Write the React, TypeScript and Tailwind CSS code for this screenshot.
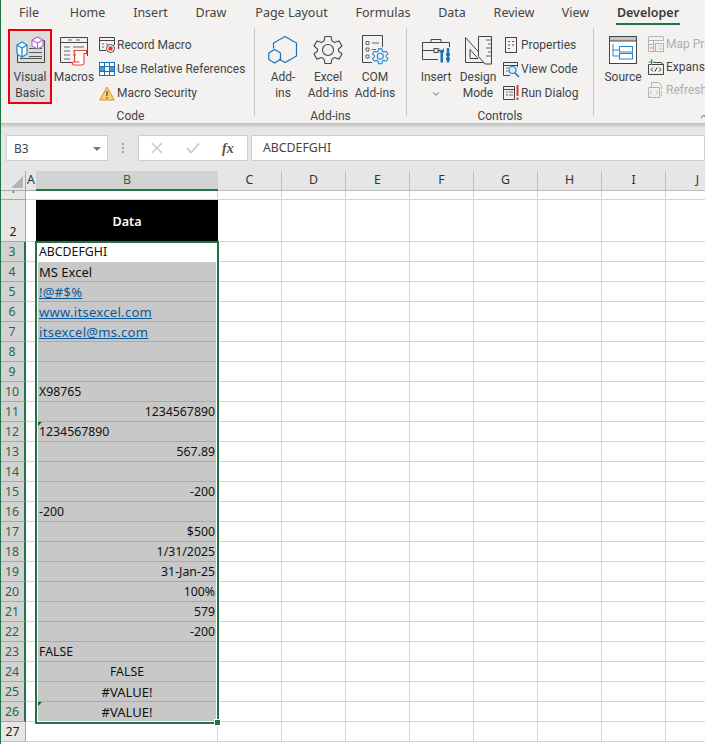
import { ChevronDown } from 'lucide-react';

const font = { fontFamily: '"Noto Sans", "Open Sans", sans-serif' };
const ribbonFont = { fontFamily: 'Roboto, "Noto Sans", sans-serif' };

const tabs = ['File', 'Home', 'Insert', 'Draw', 'Page Layout', 'Formulas', 'Data', 'Review', 'View', 'Developer'];
const tabWidths = [52, 65, 61, 60, 101, 82, 56, 68, 55, 70];
const cols = ['C', 'D', 'E', 'F', 'G', 'H', 'I', 'J'];

type Row = { n: number; text?: string; align?: 'left' | 'right' | 'center'; link?: boolean; flag?: boolean; wide?: boolean };

const rows: Row[] = [
  { n: 3, text: 'ABCDEFGHI' },
  { n: 4, text: 'MS Excel', wide: true },
  { n: 5, text: '!@#$%', link: true },
  { n: 6, text: 'www.itsexcel.com', link: true },
  { n: 7, text: 'itsexcel@ms.com', link: true },
  { n: 8 },
  { n: 9 },
  { n: 10, text: 'X98765' },
  { n: 11, text: '1234567890', align: 'right' },
  { n: 12, text: '1234567890', flag: true },
  { n: 13, text: '567.89', align: 'right' },
  { n: 14 },
  { n: 15, text: '-200', align: 'right' },
  { n: 16, text: '-200' },
  { n: 17, text: '$500', align: 'right' },
  { n: 18, text: '1/31/2025', align: 'right' },
  { n: 19, text: '31-Jan-25', align: 'right' },
  { n: 20, text: '100%', align: 'right' },
  { n: 21, text: '579', align: 'right' },
  { n: 22, text: '-200', align: 'right' },
  { n: 23, text: 'FALSE' },
  { n: 24, text: 'FALSE', align: 'center' },
  { n: 25, text: '#VALUE!', align: 'center', wide: true },
  { n: 26, text: '#VALUE!', align: 'center', flag: true, wide: true },
];

function VisualBasicIcon() {
  return (
    <svg width="32" height="30" viewBox="0 0 32 30" fill="none">
      <path d="M3.5 11.5V27.5H30.5V5.5H24" stroke="#444" />
      <path d="M15 13.5H28M15 17.5H28M15 21.5H28M6 23.5H28" stroke="#555" />
      <path d="M3 10l5-3 5 3v9l-5 3-5-3z" fill="#fff" stroke="#1e8bcd" strokeWidth="1.3" />
      <path d="M3 10l5 3 5-3M8 13v9" stroke="#1e8bcd" strokeWidth="1.3" />
      <path d="M18 5l5.500-3 5.500 3v6l-5.500 3-5.500-3z" fill="#fff" stroke="#b36ad0" strokeWidth="1.200" />
      <path d="M18 5l5.500 3 5.500-3M23.500 8v6" stroke="#b36ad0" strokeWidth="1.200" />
    </svg>
  );
}

function MacrosIcon() {
  return (
    <svg width="32" height="32" viewBox="0 0 32 32" fill="none">
      <path d="M2.500 3.500H29.500V22M2.500 3.500V28.500H15" stroke="#444" />
      <path d="M3 8.500H29" stroke="#444" />
      <path d="M10 6H14M18 6H22M6 13H12M15 13H26M6 17H12M15 17H20M6 21H12M15 21H18M6 25H12" stroke="#666" />
      <path d="M17 16.500H28.500V19.500H26V28.500C26 30 25 31 23.500 31H15.500C14 31 14 28 15.500 28H21V28.500M17 16.500C16 16.500 16 18 16.500 19V28" stroke="#e8453c" fill="#fff" strokeWidth="1.100" />
    </svg>
  );
}

function RecordIcon() {
  return (
    <svg width="16" height="16" viewBox="0 0 16 16" fill="none">
      <path d="M.5.500H15.500V8M.5.500V13.500H7" stroke="#444" />
      <path d="M1 3.500H15" stroke="#444" />
      <path d="M3 7h2M3 10h2M7 7h2" stroke="#666" />
      <circle cx="11.500" cy="11.500" r="4" fill="#fff" stroke="#444" />
      <circle cx="11.500" cy="11.500" r="2.300" fill="#e8342a" />
    </svg>
  );
}

function RelativeIcon() {
  return (
    <svg width="16" height="14" viewBox="0 0 16 14" fill="none">
      <rect x=".5" y=".5" width="15" height="13" fill="#fff" stroke="#1e70b5" />
      <rect x="1" y="5" width="14" height="4.500" fill="#3f9ae0" />
      <path d="M5.500 1V13M10.500 1V13M1 4.500H15M1 9.500H15" stroke="#1e70b5" />
      <rect x="6" y="5" width="4" height="4" fill="#fff" />
    </svg>
  );
}

function WarningIcon() {
  return (
    <svg width="16" height="15" viewBox="0 0 16 15" fill="none">
      <path d="M8 1L15.200 14H.8z" fill="#f7d27a" stroke="#e08a1e" />
      <path d="M8 5V10M8 11V12.500" stroke="#444" strokeWidth="1.200" />
    </svg>
  );
}

function AddInsIcon() {
  return (
    <svg width="30" height="30" viewBox="0 0 30 30" fill="none" stroke="#1e70b5" strokeWidth="1.200">
      <path d="M17 1.500L28.500 8V21L17 27.500L11 24M5.500 13.500V8L17 1.500" />
      <path d="M6.500 14.500L12.500 18V24.500L6.500 28L.8 24.500V18z" />
    </svg>
  );
}

function GearIcon() {
  return (
    <svg width="30" height="30" viewBox="0 0 30 30" fill="none" stroke="#444" strokeWidth="1.100">
      <path d="M12 1.500H18L19 6L21.500 7.500L26 6L29 11L25.500 14V16L29 19L26 24L21.500 22.500L19 24L18 28.500H12L11 24L8.500 22.500L4 24L1 19L4.500 16V14L1 11L4 6L8.500 7.500L11 6z" />
      <circle cx="15" cy="15" r="5.500" />
    </svg>
  );
}

function ComIcon() {
  return (
    <svg width="28" height="30" viewBox="0 0 28 30" fill="none">
      <path d="M1.500 27.500V.5H21.500V12M1.500 27.500H11" stroke="#444" />
      <path d="M5 6.500h3v3h-3zM5 13h3v3h-3zM5 20h3v3h-3z" stroke="#666" />
      <path d="M11 8H18M11 14.500H15" stroke="#666" />
      <g transform="translate(11 13) scale(.55)"><path d="M12 1.500H18L19 6L21.500 7.500L26 6L29 11L25.500 14V16L29 19L26 24L21.500 22.500L19 24L18 28.500H12L11 24L8.500 22.500L4 24L1 19L4.500 16V14L1 11L4 6L8.500 7.500L11 6z" fill="#f3f2f1" stroke="#1e8bcd" strokeWidth="2" /><circle cx="15" cy="15" r="5.500" stroke="#1e8bcd" strokeWidth="2" /></g>
    </svg>
  );
}

function InsertIcon() {
  return (
    <svg width="30" height="30" viewBox="0 0 30 30" fill="none">
      <path d="M1.500 7.500H28.500V12M1.500 7.500V24.500H17M10 7.500V4.500H20V7.500M1.500 15.500H13M17 15.500H19" stroke="#444" />
      <rect x="13" y="13.500" width="4" height="4" stroke="#444" />
      <path d="M21.500 13V17.500H22.500V27.500H25V17.500H26V13L24.500 15H22.500z" fill="#1e70b5" transform="translate(-3 0)" />
      <path d="M27 13V27.500M25 19.500H29M25 24H29" stroke="#1e70b5" strokeWidth="2.400" />
    </svg>
  );
}

function DesignIcon() {
  return (
    <svg width="28" height="30" viewBox="0 0 28 30" fill="none">
      <path d="M1.500 2.500L24 27.500H1.500z" stroke="#444" />
      <path d="M6 14.500L14 23.500H6z" stroke="#444" />
      <path d="M13.500 1.500H26.500V29H20L13.500 21.500z" fill="#f3f2f1" stroke="#444" transform="translate(1 0)" />
      <path d="M22 5h5M24 9h3M22 13h5M24 17h3M22 21h5" stroke="#666" />
    </svg>
  );
}

function PropertiesIcon() {
  return (
    <svg width="12" height="16" viewBox="0 0 12 16" fill="none" stroke="#444">
      <rect x=".5" y=".5" width="11" height="15" />
      <path d="M3 4.500h2M7 4.500h2M3 8h2M7 8h2M3 11.500h2" stroke="#555" />
    </svg>
  );
}

function ViewCodeIcon() {
  return (
    <svg width="17" height="17" viewBox="0 0 17 17" fill="none">
      <path d="M.5 1.500H14.500V6M.5 1.500V14.500H7M1 4.500H14" stroke="#444" />
      <path d="M3 7h2M3 10h2" stroke="#666" />
      <circle cx="9.500" cy="9" r="3.500" fill="#d8ecfa" stroke="#1e8bcd" strokeWidth="1.200" />
      <path d="M12 12l4 4" stroke="#1e70b5" strokeWidth="1.600" />
    </svg>
  );
}

function RunDialogIcon() {
  return (
    <svg width="16" height="16" viewBox="0 0 16 16" fill="none">
      <path d="M.5 1.500H11.500V14.500H.5zM1 4.500H11" stroke="#444" />
      <path d="M3 7h2M6 7h4M3 10h2M6 10h4" stroke="#666" />
      <path d="M14.500 0V11M14.500 12.500V15" stroke="#e8342a" strokeWidth="2" />
    </svg>
  );
}

function SourceIcon() {
  return (
    <svg width="28" height="28" viewBox="0 0 28 28" fill="none">
      <rect x=".5" y=".5" width="27" height="27" fill="#fff" stroke="#444" />
      <rect x="1" y="1" width="26" height="4" fill="#c8c6c4" />
      <path d="M.5 5H27.500" stroke="#444" />
      <path d="M4 8V20H10M4 14H10" stroke="#1e8bcd" />
      <rect x="10.500" y="10.500" width="13" height="5.500" stroke="#1e8bcd" />
      <rect x="10.500" y="17.500" width="13" height="5.500" stroke="#1e8bcd" />
    </svg>
  );
}

function MapPropsIcon() {
  return (
    <svg width="16" height="16" viewBox="0 0 16 16" fill="none" stroke="#b5b3b1">
      <path d="M.5.500H15.500V4.500H.5zM.5 4.500V15.500H7M5.500 4.500V15.500M.5 8.500H5M.5 12H5" />
      <rect x="7.500" y="7.500" width="8" height="8" />
      <path d="M10 10h1M12 10h2M10 13h1M12 13h2" />
    </svg>
  );
}

function ExpansionIcon() {
  return (
    <svg width="16" height="16" viewBox="0 0 16 16" fill="none">
      <path d="M.5 5.500H15.500V15.500H.5z" stroke="#444" />
      <path d="M6 3.500H13L15.500 5.500" stroke="#444" />
      <path d="M5 8.500L3 10.500L5 12.500M11 8.500L13 10.500L11 12.500M7 12.500L9 8.500" stroke="#333" />
      <path d="M3.500 0V6M.5 3H6.500" stroke="#2e9e3f" strokeWidth="1.200" />
    </svg>
  );
}

function RefreshIcon() {
  return (
    <svg width="16" height="16" viewBox="0 0 16 16" fill="none" stroke="#b5b3b1">
      <path d="M3.500 5V.5H10.500L13.500 3.500V7M.5 5.500H11.500V15.500H.5z" />
      <path d="M4 8.500L2 10.500L4 12.500M8 8.500L10 10.500L8 12.500" />
      <path d="M13.500 9V15" strokeDasharray="2 1" />
    </svg>
  );
}

function BigButton({ icon, label, width, active }: { icon: React.ReactNode; label: React.ReactNode; width: string; active?: boolean }) {
  return (
    <div className={`flex flex-col items-center shrink-0 text-center leading-[16px] ${width} ${active ? 'bg-[#dcdcdc] border-[2px] border-[#e8000d] h-[75px] mt-[3px] pt-[2px]' : 'h-[75px] mt-[3px] pt-[4px]'}`}>
      <div className="h-[34px] flex items-center justify-center">{icon}</div>
      <div className="mt-[2px]">{label}</div>
    </div>
  );
}

function SmallButton({ icon, label, disabled, tight }: { icon: React.ReactNode; label: string; disabled?: boolean; tight?: boolean }) {
  return (
    <div className={`flex items-center whitespace-nowrap ${tight ? 'h-[23px]' : 'h-[24px]'} ${disabled ? 'text-[#b0aeac]' : ''}`}>
      <div className="w-[20px] flex justify-center shrink-0">{icon}</div>
      <span>{label}</span>
    </div>
  );
}

function Group({ width, label, children, last }: { width: string; label: string; children: React.ReactNode; last?: boolean }) {
  return (
    <div className={`flex shrink-0 ${width}`}>
      <div className="flex-1 min-w-0 flex flex-col">
        <div className="flex h-[84px] overflow-hidden">{children}</div>
        <div className="text-center leading-[14px] h-[14px]">{label}</div>
      </div>
      {!last && <div className="w-px h-[88px] mt-[2px] bg-[#c8c6c4]" />}
    </div>
  );
}

function RowHeader({ n, selected }: { n: number; selected: boolean }) {
  return (
    <div className={`flex items-center justify-center h-full border-b pr-[1px] pt-[2px] ${selected ? 'bg-[#d2d2d2] text-[#1f6b47] border-[#a8a8a8] border-r-2 border-r-[#217346]' : 'bg-[#e6e6e6] text-[#222] border-[#c4c4c4] border-r border-r-[#a8a8a8]'}`}>
      {n}
    </div>
  );
}

export default function App() {
  return (
    <div className="w-[705px] h-[744px] overflow-hidden relative bg-white text-[#333] text-[12px] border-l border-[#217346]" style={font}>
      {/* tabs */}
      <div className="h-[26px] bg-[#f3f2f1] flex pl-[2px] text-[12.5px] text-[#444] leading-[26px]">
        {tabs.map((t, i) => (
          <div key={t} className={`relative text-center shrink-0 ${t === 'Developer' ? 'ml-[10px]' : ''}`} style={{ width: tabWidths[i] }}>
            <span className={t === 'Developer' ? 'font-semibold text-[#3b3a39]' : ''}>{t}</span>
            {t === 'Developer' && <div className="absolute left-[3px] right-[3px] top-[23px] h-[2px] bg-[#217346]" />}
          </div>
        ))}
      </div>

      {/* ribbon */}
      <div className="h-[97px] bg-[#f3f2f1] flex pl-[6px] text-[#444] overflow-hidden" style={ribbonFont}>
        <Group width="w-[248px]" label="Code">
          <BigButton active width="w-[44px] ml-[1px]" icon={<VisualBasicIcon />} label={<>Visual<br />Basic</>} />
          <BigButton width="w-[40px] ml-[2px]" icon={<MacrosIcon />} label="Macros" />
          <div className="flex flex-col ml-[3px] mt-[7px]">
            <SmallButton icon={<RecordIcon />} label="Record Macro" />
            <SmallButton icon={<RelativeIcon />} label="Use Relative References" />
            <SmallButton icon={<WarningIcon />} label="Macro Security" />
          </div>
        </Group>
        <Group width="w-[152px]" label="Add-ins">
          <BigButton width="w-[42px] ml-[7px]" icon={<AddInsIcon />} label={<>Add-<br />ins</>} />
          <BigButton width="w-[48px]" icon={<GearIcon />} label={<>Excel<br />Add-ins</>} />
          <BigButton width="w-[48px] -ml-[1px]" icon={<ComIcon />} label={<>COM<br />Add-ins</>} />
        </Group>
        <Group width="w-[187px]" label="Controls">
          <BigButton width="w-[42px] ml-[8px]" icon={<InsertIcon />} label={<div className="flex flex-col items-center">Insert<ChevronDown size={10} className="mt-[4px]" /></div>} />
          <BigButton width="w-[42px]" icon={<DesignIcon />} label={<>Design<br />Mode</>} />
          <div className="flex flex-col ml-[2px] mt-[7px]">
            <SmallButton icon={<PropertiesIcon />} label="Properties" />
            <SmallButton icon={<ViewCodeIcon />} label="View Code" />
            <SmallButton icon={<RunDialogIcon />} label="Run Dialog" />
          </div>
        </Group>
        <Group width="w-[112px]" label="" last>
          <BigButton width="w-[44px] ml-[7px]" icon={<SourceIcon />} label="Source" />
          <div className="flex flex-col ml-[1px] mt-[6px]">
            <SmallButton tight disabled icon={<MapPropsIcon />} label="Map Properties" />
            <SmallButton tight icon={<ExpansionIcon />} label="Expansion Packs" />
            <SmallButton tight disabled icon={<RefreshIcon />} label="Refresh Data" />
          </div>
        </Group>
      </div>
      <div className="h-[5px] bg-gradient-to-b from-[#bdbdbd] to-[#e6e6e6]" />

      {/* formula bar */}
      <div className="h-[43px] bg-[#e6e6e6] flex items-start pl-[5px] pt-[7px] text-[#444]">
        <div className="w-[102px] h-[26px] bg-white border border-[#d0d0d0] flex items-center justify-between pl-[7px] pr-[5px] pt-[1px]">
          <span>B3</span>
          <span className="w-0 h-0 border-l-[4px] border-r-[4px] border-t-[4px] border-l-transparent border-r-transparent border-t-[#777] mr-[1px]" />
        </div>
        <div className="w-[30px] h-[26px] flex flex-col items-center justify-center gap-[2px]">
          <span className="w-[2px] h-[2px] bg-[#a0a0a0]" />
          <span className="w-[2px] h-[2px] bg-[#a0a0a0]" />
          <span className="w-[2px] h-[2px] bg-[#a0a0a0]" />
        </div>
        <div className="w-[110px] h-[26px] bg-white border border-[#d0d0d0] flex items-center pl-[12px]">
          <svg width="12" height="12" viewBox="0 0 12 12" className="shrink-0"><path d="M1 1L11 11M11 1L1 11" stroke="#c8c8c8" strokeWidth="1.500" /></svg>
          <svg width="14" height="12" viewBox="0 0 14 12" className="shrink-0 ml-[23px]"><path d="M1 6L5 10.500L13 1.500" stroke="#c8c8c8" strokeWidth="1.800" fill="none" /></svg>
          <span className="ml-[22px] text-[14px] italic font-semibold text-[#555]" style={{ fontFamily: '"Liberation Serif", serif' }}>fx</span>
        </div>
        <div className="flex-1 h-[26px] ml-[3px] bg-white border border-[#d0d0d0] flex items-center pl-[11px] pt-[1px] text-[12.3px]">ABCDEFGHI</div>
      </div>

      {/* sheet */}
      <div className="relative grid grid-cols-[25px_10px_182px_repeat(8,64px)] grid-rows-[20px_9px_42px_repeat(25,20px)] text-[12.3px] text-[#111] leading-none">
        <div className="bg-[#e6e6e6] border-r border-b border-[#a8a8a8] flex items-end justify-end p-[2px]">
          <div className="w-0 h-0 border-l-[12px] border-b-[12px] border-l-transparent border-b-[#b4b4b4]" />
        </div>
        <div className="bg-[#e6e6e6] border-b border-[#a8a8a8] flex items-center justify-center text-[#333]">A</div>
        <div className="bg-[#d2d2d2] border-b-2 border-[#217346] flex items-center justify-center text-[#1f6b47]">B</div>
        {cols.map(c => (
          <div key={c} className="bg-[#e6e6e6] border-r border-b border-[#bdbdbd] flex items-center justify-center text-[#333]">{c}</div>
        ))}

        {/* row 1 */}
        <div className="bg-[#e6e6e6] border-r border-b border-[#a8a8a8] overflow-hidden flex justify-center text-[#444]"><span className="-mt-[8px]">1</span></div>
        <div className="border-b border-[#d4d4d4]" />
        <div className="border-b border-r border-[#d4d4d4]" />
        {cols.map(c => <div key={c} className="border-r border-b border-[#d4d4d4]" />)}

        {/* row 2 */}
        <div className="bg-[#e6e6e6] border-r border-b border-[#a8a8a8] flex items-end justify-center pb-[3px] text-[#222]">2</div>
        <div className="border-b border-[#d4d4d4]" />
        <div className="bg-black text-white font-semibold flex items-center justify-center pt-[2px] text-[12.6px]">Data</div>
        {cols.map(c => <div key={c} className="border-r border-b border-[#d4d4d4]" />)}

        {rows.map(r => (
          <div key={r.n} className="contents">
            <RowHeader n={r.n} selected />
            <div className="border-b border-[#d4d4d4]" />
            <div className={`relative flex items-center px-[3px] pt-[2px] border-b ${r.n === 3 ? 'bg-white border-[#ffffff]' : 'bg-[#c8c8c8] border-[#a9a9a9]'} ${r.align === 'right' ? 'justify-end' : r.align === 'center' ? 'justify-center' : 'justify-start'} ${r.link ? 'text-[#0a5a9c] underline text-[13px] tracking-[0.3px]' : ''} ${r.wide ? 'text-[13px]' : ''}`}>
              {r.flag && <div className="absolute left-[1px] top-0 w-0 h-0 border-t-[5px] border-r-[5px] border-t-[#0f6b1f] border-r-transparent" />}
              {r.text}
            </div>
            {cols.map(c => <div key={c} className="border-r border-b border-[#d4d4d4]" />)}
          </div>
        ))}

        {/* row 27 */}
        <RowHeader n={27} selected={false} />
        <div className="border-b border-[#d4d4d4]" />
        <div className="border-r border-b border-[#d4d4d4]" />
        {cols.map(c => <div key={c} className="border-r border-b border-[#d4d4d4]" />)}

        {/* selection frame */}
        <div className="absolute left-[34px] top-[70px] w-[184px] h-[483px] border-2 border-[#217346] pointer-events-none">
          <div className="w-full h-full border border-white" />
        </div>
        <div className="absolute left-[213px] top-[548px] w-[7px] h-[7px] bg-[#217346] border border-white pointer-events-none" />
      </div>

      <svg width="6" height="6" viewBox="0 0 6 6" className="absolute left-[699px] top-[113px]"><path d="M1 5L3.500 2L6 5" stroke="#666" fill="none" /></svg>
    </div>
  );
}
